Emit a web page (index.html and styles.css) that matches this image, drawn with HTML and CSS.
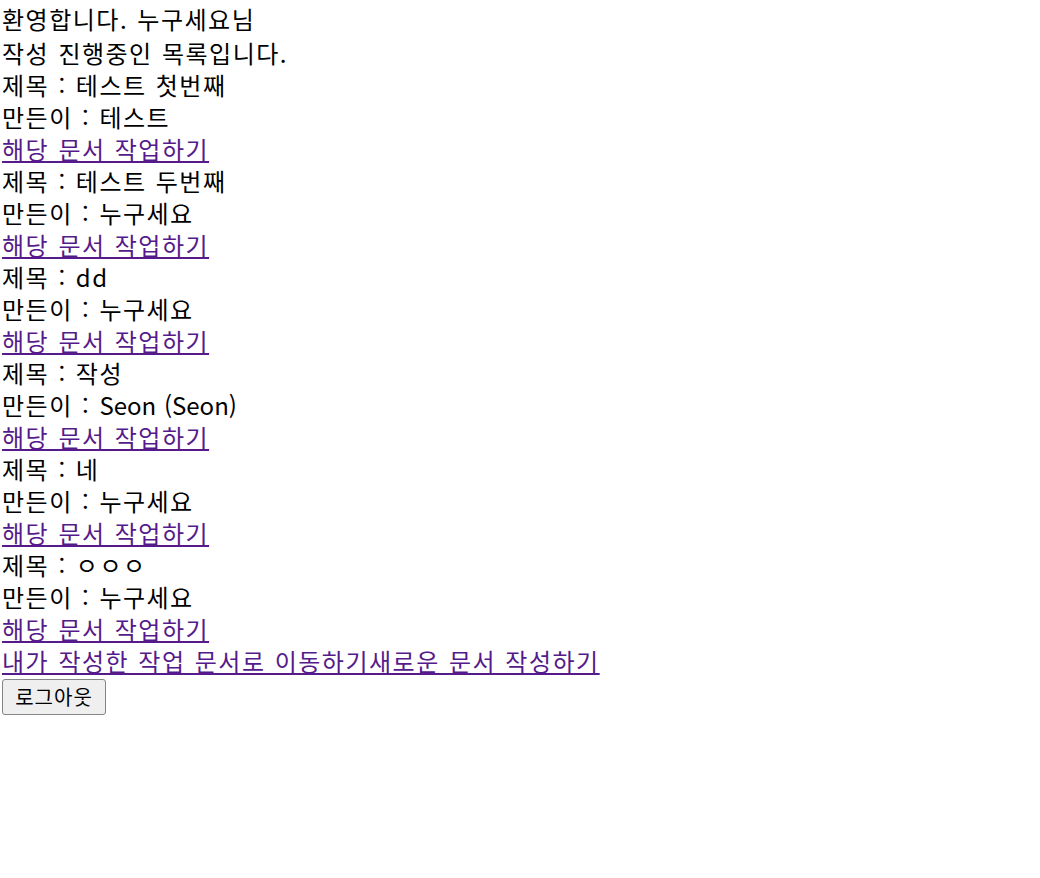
FILE: index.html
```html
<!DOCTYPE html>
<html lang="ko">
<head>
<meta charset="utf-8">
<link rel="stylesheet" href="styles.css">
</head>
<body>
<div class="page">
  <div class="line first">환영합니다. 누구세요님</div>
  <div class="line">작성 진행중인 목록입니다.</div>
  <div class="item">
    <div class="line">제목 : 테스트 첫번째</div>
    <div class="line">만든이 : 테스트</div>
    <a class="link" href="#">해당 문서 작업하기</a>
  </div>
  <div class="item">
    <div class="line">제목 : 테스트 두번째</div>
    <div class="line">만든이 : 누구세요</div>
    <a class="link" href="#">해당 문서 작업하기</a>
  </div>
  <div class="item">
    <div class="line">제목 : dd</div>
    <div class="line">만든이 : 누구세요</div>
    <a class="link" href="#">해당 문서 작업하기</a>
  </div>
  <div class="item">
    <div class="line">제목 : 작성</div>
    <div class="line">만든이 : <span class="latin">Seon (Seon)</span></div>
    <a class="link" href="#">해당 문서 작업하기</a>
  </div>
  <div class="item">
    <div class="line">제목 : 네</div>
    <div class="line">만든이 : 누구세요</div>
    <a class="link" href="#">해당 문서 작업하기</a>
  </div>
  <div class="item">
    <div class="line">제목 : ㅇㅇㅇ</div>
    <div class="line">만든이 : 누구세요</div>
    <a class="link" href="#">해당 문서 작업하기</a>
  </div>
  <div class="line"><a class="link-inline" href="#">내가 작성한 작업 문서로 이동하기</a><a class="link-inline" href="#">새로운 문서 작성하기</a></div>
  <button class="btn" type="button">로그아웃</button>
</div>
</body>
</html>
```

FILE: styles.css
```css
html, body {
  margin: 0;
  padding: 0;
  background: #ffffff;
}
.page {
  padding: 3px 2px;
  font-family: "Noto Sans CJK KR", "Noto Sans", sans-serif;
  font-size: 24px;
  line-height: 32px;
  letter-spacing: 1.5px;
  word-spacing: 1px;
  color: #000000;
}
.line {
  display: block;
  white-space: nowrap;
}
.first {
  margin-bottom: 2px;
}
.latin {
  letter-spacing: 0;
}
.link {
  display: block;
  width: max-content;
  color: #551a8b;
  text-decoration: underline;
}
.link-inline {
  color: #551a8b;
  text-decoration: underline;
}
.btn {
  display: block;
  margin: 2px 0 0;
  width: 104px;
  height: 36px;
  padding: 0 4px;
  font-family: "Noto Sans CJK KR", "Noto Sans", sans-serif;
  font-size: 20px;
  letter-spacing: 1px;
  word-spacing: 0;
  line-height: 1;
  color: #000;
  background: #efefef;
  border: 1px solid #858585;
  border-radius: 3px;
}
```
